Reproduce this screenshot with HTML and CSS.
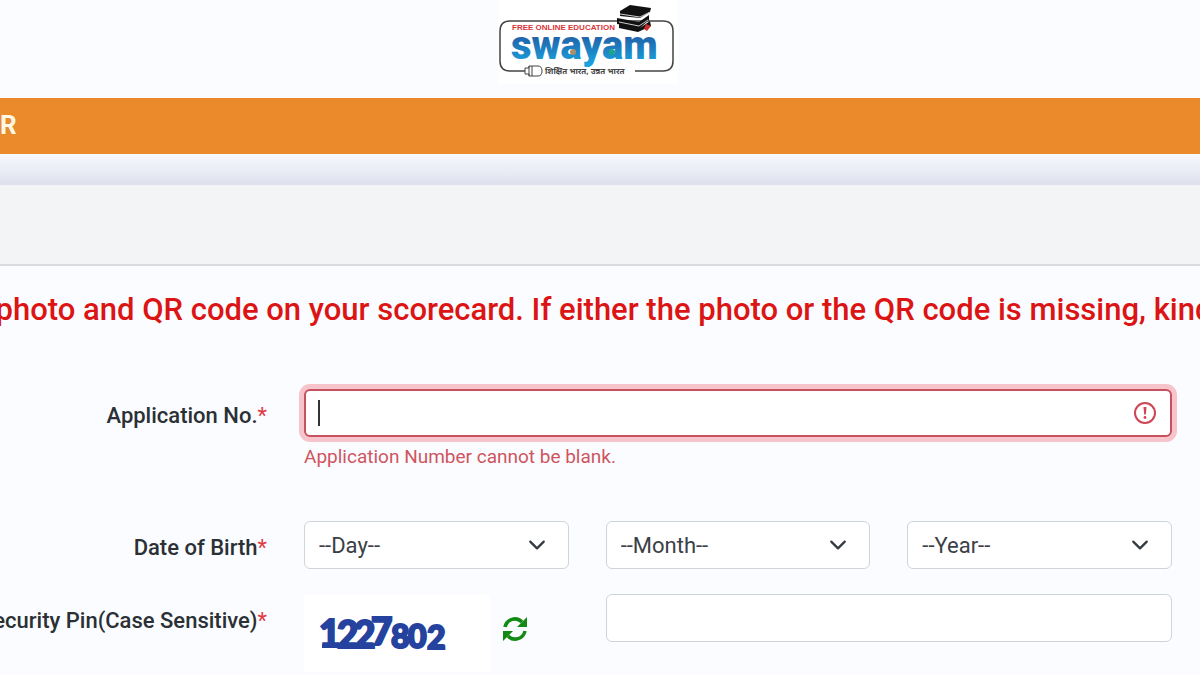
FILE: index.html
```
<!DOCTYPE html>
<html lang="en">
<head>
    <meta charset="UTF-8">
    <meta name="viewport" content="width=device-width, initial-scale=1.0">
    <title>Swayam Scorecard</title>
    <link rel="stylesheet" href="styles.css">
</head>
<body>

    <header class="header">
        <svg class="logo" width="180" height="84" viewBox="0 0 180 84" role="img" aria-label="Swayam">
            <defs>
                <linearGradient id="blue" x1="0" y1="0" x2="0" y2="1">
                    <stop offset="0.2" stop-color="#2257a0"/>
                    <stop offset="0.9" stop-color="#1aa3de"/>
                </linearGradient>
            </defs>
            <rect width="180" height="84" fill="#fff"/>
            <path d="M27 71H12q-10 0-10-10V31q0-10 10-10h153q10 0 10 10v30q0 10-10 10h-28" fill="none" stroke="#444" stroke-width="1.5"/>
            <path d="M27 68h4v-2h9q4 0 4 5t-4 5h-9v-2h-4zM31 66v10M34 66v10" fill="#fff" stroke="#444"/>
            <text class="logo-top" x="14" y="30">FREE ONLINE EDUCATION</text>
            <text class="logo-name" x="13" y="59">swayam</text>
            <circle cx="75" cy="52" r="3" fill="#a8916a"/>
            <circle cx="114" cy="52" r="3" fill="#1aa58c"/>
            <text class="logo-bottom" x="47" y="74">शिक्षित भारत, उन्नत भारत</text>
            <path d="M122 11l10-6 21 3-1 4-10 6-20-2zM119 18l22 4 10-7v5l-9 8-23-4zM121 24l21 4 10-7 1 5-13 6-19-4z" fill="#111"/>
            <path d="M122 14l20 3 10-5M121 22l20 4 9-6" fill="none" stroke="#ccc" stroke-width="1"/>
            <path d="M148 24l5 2-4 5-3-2z" fill="#c9302c"/>
        </svg>
    </header>

    <div class="title-bar">R</div>
    <div class="shade"></div>
    <div class="card-header"></div>

    <main>
        <p class="notice">photo and QR code on your scorecard. If either the photo or the QR code is missing, kind</p>

        <form class="form">
            <div class="row app-row">
                <label class="label" for="appno">Application No.<span class="req">*</span></label>
                <div class="field wide">
                    <div class="input-box">
                        <input class="input invalid" id="appno" type="text" aria-describedby="appno-error">
                        <span class="caret"></span>
                        <svg class="error-icon" width="24" height="24" viewBox="0 0 24 24">
                            <circle cx="12" cy="12" r="10" fill="none" stroke="#cf4554" stroke-width="2"/>
                            <path d="M10.500 6h3l-.7 7.500h-1.600z" fill="#cf4554"/>
                            <circle cx="12" cy="16.500" r="1.400" fill="#cf4554"/>
                        </svg>
                    </div>
                    <div class="error" id="appno-error">Application Number cannot be blank.</div>
                </div>
            </div>

            <div class="row dob-row">
                <label class="label" for="day">Date of Birth<span class="req">*</span></label>
                <select class="input select" id="day"><option>--Day--</option></select>
                <select class="input select" aria-label="Month"><option>--Month--</option></select>
                <select class="input select" aria-label="Year"><option>--Year--</option></select>
            </div>

            <div class="row">
                <label class="label" for="pin">Security Pin(Case Sensitive)<span class="req">*</span></label>
                <div class="captcha">
                    <svg class="captcha-code" width="186" height="78" viewBox="0 0 186 78">
                        <rect width="186" height="78" fill="#fff"/>
                        <text class="captcha-big" x="15 33 50 67" y="53 54 54 51">1227</text>
                        <text class="captcha-small" x="87 104 123" y="54 54 55">802</text>
                        <path d="M18 50h16v4H18z" fill="#24429e"/>
                    </svg>
                    <button class="refresh" type="button" aria-label="Refresh code">
                        <svg width="26" height="26" viewBox="0 0 26 26">
                            <path d="M3 11a10 10 0 0 1 17-5M23 15a10 10 0 0 1-17 5" fill="none" stroke="#138a13" stroke-width="3.500"/>
                            <path d="M25 1v10H15zM1 25V15h10z" fill="#138a13"/>
                        </svg>
                    </button>
                </div>
                <input class="input pin" id="pin" type="text">
            </div>
        </form>
    </main>

</body>
</html>
```
FILE: styles.css
```
* {
    box-sizing: border-box;
}

body {
    margin: 0;
    background-color: #fafcff;
    color: #2b3035;
    font-family: Roboto, sans-serif;
    font-size: 22px;
    overflow: hidden;
}

.header {
    display: flex;
    justify-content: center;
    height: 98px;
    padding-right: 24px;
}

.logo-top {
    font: bold 8px "Liberation Sans", sans-serif;
    fill: #d9363a;
}

.logo-name {
    font: 900 40px Roboto, sans-serif;
    fill: url(#blue);
}

.logo-bottom {
    font: bold 8px "Noto Sans", sans-serif;
    fill: #444;
}

.title-bar {
    height: 56px;
    background-color: #ea8a2a;
    color: #fff8e6;
    font-size: 26px;
    font-weight: 700;
    line-height: 54px;
}

.shade {
    height: 31px;
    background: linear-gradient(#f7f9fd, #dfe0ee);
}

.card-header {
    height: 81px;
    background-color: #f3f4f6;
    border-bottom: 2px solid #d9dadd;
}

.notice {
    display: flex;
    justify-content: center;
    margin: 24px 0 59px;
    padding-left: 8px;
    color: #dc1414;
    font-size: 31px;
    font-weight: 500;
    line-height: 40px;
    white-space: nowrap;
}

.form {
    padding-right: 28px;
}

.row {
    display: grid;
    grid-template-columns: 267px repeat(3, 1fr);
    column-gap: 37px;
    align-items: start;
}

.app-row {
    margin-bottom: 52px;
}

.dob-row {
    margin-bottom: 19px;
}

.label {
    display: flex;
    justify-content: flex-end;
    font-weight: 500;
    line-height: 54px;
    white-space: nowrap;
}

.req {
    color: #e03a45;
    font-weight: 400;
}

.wide {
    grid-column: span 3;
}

.input-box {
    position: relative;
}

.input {
    width: 100%;
    height: 48px;
    padding: 0 14px;
    border: 1px solid #ced4da;
    border-radius: 6px;
    background-color: #fff;
    color: #3b4046;
    font: inherit;
}

.invalid {
    display: block;
    border: 2px solid #c6525f;
    box-shadow: 0 0 0 5px #f8c4cb;
    outline: none;
}

.caret {
    position: absolute;
    top: 11px;
    left: 14px;
    width: 2px;
    height: 26px;
    background-color: #333;
}

.error-icon {
    position: absolute;
    top: 12px;
    right: 15px;
}

.error {
    padding-top: 8px;
    color: #cf5560;
    font-size: 19px;
    line-height: 24px;
}

.select {
    appearance: none;
    background-image: url("data:image/svg+xml,%3Csvg xmlns='http://www.w3.org/2000/svg' viewBox='0 0 16 16'%3E%3Cpath fill='none' stroke='%23343a40' stroke-width='2' stroke-linecap='round' stroke-linejoin='round' d='m2 5 6 6 6-6'/%3E%3C/svg%3E");
    background-repeat: no-repeat;
    background-position: right 22px center;
    background-size: 18px;
}

.captcha {
    display: flex;
    align-items: flex-start;
    gap: 12px;
}

.captcha-code {
    flex: none;
}

.captcha-big,
.captcha-small {
    font-family: Lato, sans-serif;
    font-weight: 900;
    fill: #24429e;
    stroke: #24429e;
    stroke-width: 2px;
}

.captcha-big {
    font-size: 37px;
}

.captcha-small {
    font-size: 32px;
}

.refresh {
    padding: 22px 0;
    border: 0;
    background: none;
    line-height: 0;
    cursor: pointer;
}

.pin {
    grid-column: span 2;
}
```
